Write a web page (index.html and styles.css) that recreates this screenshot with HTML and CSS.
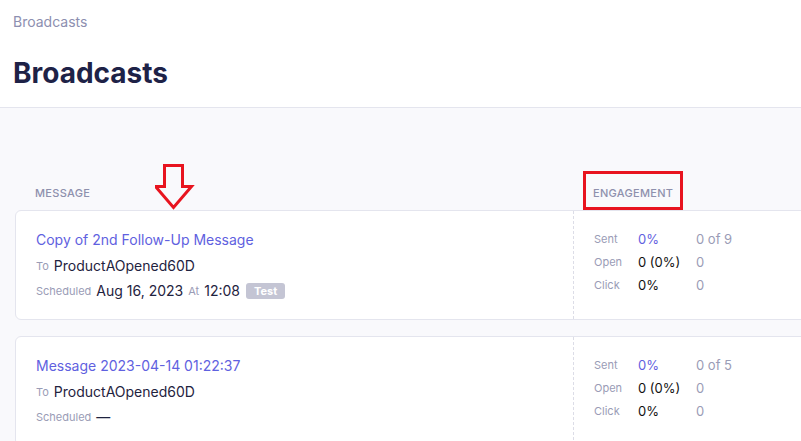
FILE: index.html
```html
<!DOCTYPE html>
<html lang="en">
<head>
    <meta charset="UTF-8">
    <meta name="viewport" content="width=device-width, initial-scale=1.0">
    <title>Broadcasts</title>
    <link rel="stylesheet" href="styles.css">
</head>
<body>
    <div class="page-header">
        <div class="breadcrumb">Broadcasts</div>
        <h1 class="page-title">Broadcasts</h1>
    </div>

    <div class="content">
        <div class="columns">
            <div class="col-message">
                Message
                <svg class="arrow-mark" width="40" height="48" viewBox="0 0 40 48">
                    <polygon points="9.5,2.5 27.5,2.5 27.5,23.5 36.5,23.5 18.5,44.5 0.5,23.5 9.5,23.5" fill="none" stroke="#e8141f" stroke-width="3"/>
                </svg>
            </div>
            <div class="col-engagement">
                <span class="highlight">Engagement</span>
            </div>
        </div>

        <div class="broadcast-card">
            <div class="card-message">
                <div class="message-title">Copy of 2nd Follow-Up Message</div>
                <div class="message-row">
                    <span class="label">To</span>
                    <span class="value">ProductAOpened60D</span>
                </div>
                <div class="message-row">
                    <span class="label">Scheduled</span>
                    <span class="value">Aug 16, 2023</span>
                    <span class="label">At</span>
                    <span class="value">12:08</span>
                    <span class="badge">Test</span>
                </div>
            </div>
            <div class="card-engagement">
                <span class="label">Sent</span><span class="stat accent">0%</span><span class="stat muted">0 of 9</span>
                <span class="label">Open</span><span class="stat">0 (0%)</span><span class="stat muted">0</span>
                <span class="label">Click</span><span class="stat">0%</span><span class="stat muted">0</span>
            </div>
        </div>

        <div class="broadcast-card">
            <div class="card-message">
                <div class="message-title">Message 2023-04-14 01:22:37</div>
                <div class="message-row">
                    <span class="label">To</span>
                    <span class="value">ProductAOpened60D</span>
                </div>
                <div class="message-row">
                    <span class="label">Scheduled</span>
                    <span class="value">&mdash;</span>
                </div>
            </div>
            <div class="card-engagement">
                <span class="label">Sent</span><span class="stat accent">0%</span><span class="stat muted">0 of 5</span>
                <span class="label">Open</span><span class="stat">0 (0%)</span><span class="stat muted">0</span>
                <span class="label">Click</span><span class="stat">0%</span><span class="stat muted">0</span>
            </div>
        </div>
    </div>
</body>
</html>
```

FILE: styles.css
```css
* {
    margin: 0;
    padding: 0;
    box-sizing: border-box;
    font-family: Inter, 'Noto Sans', sans-serif;
}

body {
    width: 801px;
    height: 441px;
    overflow: hidden;
    background-color: #f9f9fc;
    color: #1f2340;
}

.page-header {
    height: 108px;
    padding: 12px 13px 0;
    background-color: white;
    border-bottom: 1px solid #e4e5ee;
}

.breadcrumb {
    font-size: 14px;
    line-height: 20px;
    color: #8d8fb0;
}

.page-title {
    margin-top: 24px;
    font-size: 28px;
    line-height: 34px;
    font-weight: 700;
    color: #1e2247;
}

.content {
    overflow: hidden;
    padding: 78px 0 0 15px;
}

.columns {
    display: flex;
    padding-bottom: 10px;
    font-size: 11px;
    line-height: 14px;
    font-weight: 500;
    letter-spacing: 0.3px;
    text-transform: uppercase;
    color: #8e90ad;
}

.col-message {
    position: relative;
    width: 558px;
    padding-left: 20px;
}

.col-engagement {
    padding-left: 20px;
}

.highlight {
    position: relative;
}

/* annotation overlays */
.highlight::after {
    content: "";
    position: absolute;
    left: -10px;
    top: -15px;
    width: 100px;
    height: 39px;
    box-sizing: border-box;
    border: 3px solid #e8141f;
}

.arrow-mark {
    position: absolute;
    left: 140px;
    top: -23px;
}

.broadcast-card {
    display: flex;
    width: 900px;
    margin-bottom: 16px;
    background-color: white;
    border: 1px solid #e4e5ee;
    border-radius: 6px;
}

.card-message {
    width: 557px;
    padding: 19px 20px 18px;
}

.message-title {
    font-size: 14px;
    line-height: 20px;
    color: #5f61e0;
}

.message-row {
    display: flex;
    align-items: center;
    gap: 5px;
    margin-top: 6px;
    line-height: 20px;
}

.message-row + .message-row {
    margin-top: 5px;
}

.label {
    font-size: 11px;
    color: #9a9cb6;
}

.value {
    font-size: 14px;
    color: #1f2340;
}

.badge {
    margin-left: 1px;
    padding: 0 8px;
    height: 16px;
    line-height: 16px;
    border-radius: 3px;
    background-color: #c4c5d4;
    color: white;
    font-size: 11px;
    font-weight: 700;
}

.card-engagement {
    display: grid;
    grid-template-columns: 44px 58px auto;
    grid-auto-rows: 20px;
    row-gap: 3px;
    align-items: center;
    align-content: start;
    padding: 18px 20px;
    border-left: 1px dashed #dcdde7;
}

.stat {
    font-size: 13px;
    color: #111;
}

.stat.accent {
    color: #5f61e0;
}

.stat.muted {
    color: #9a9cb6;
}
```
